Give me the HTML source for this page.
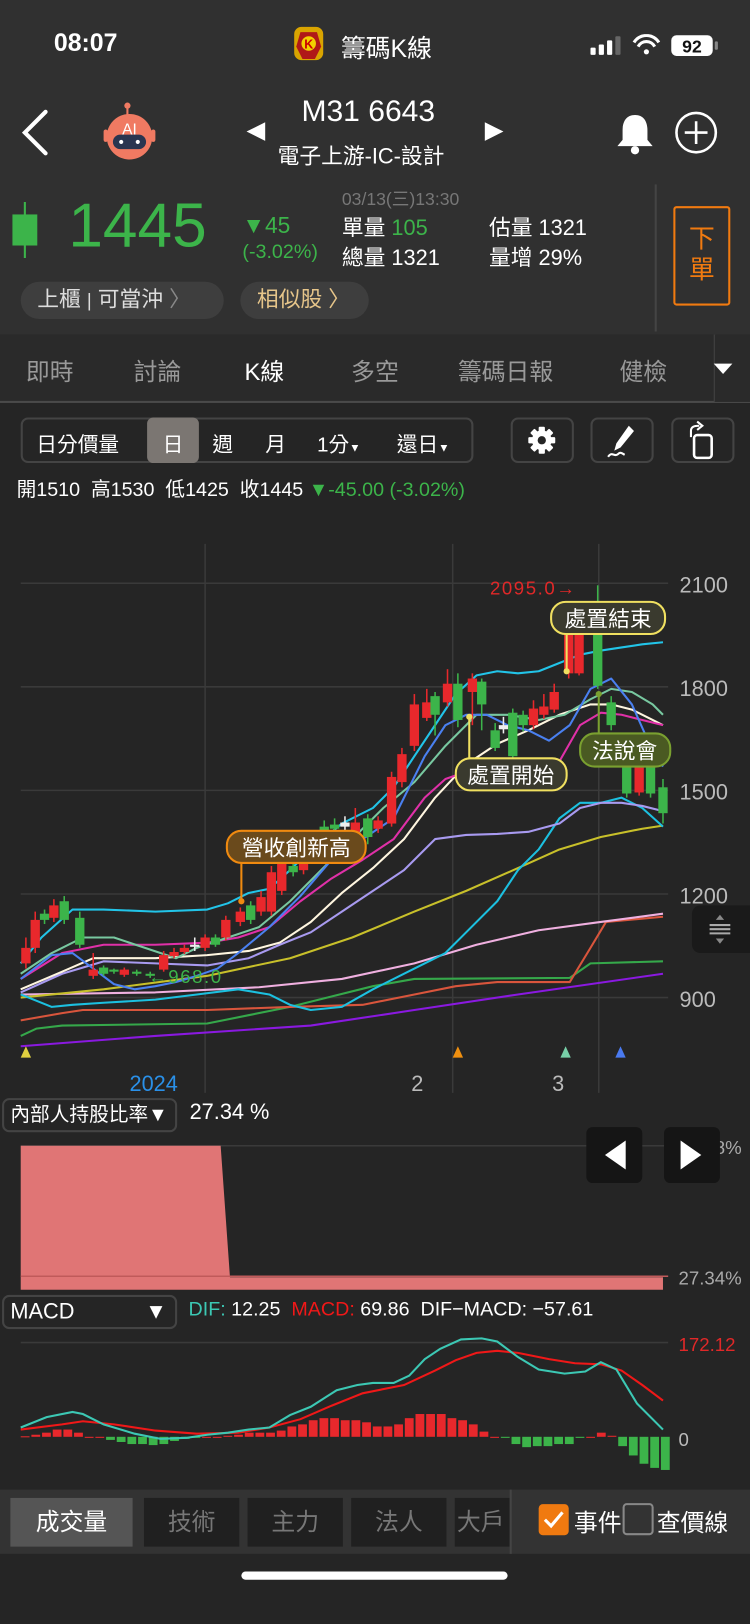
<!DOCTYPE html>
<html><head><meta charset="utf-8">
<style>
*{margin:0;padding:0;box-sizing:border-box}
html,body{width:750px;height:1624px;overflow:hidden;background:#252525}
#w{position:absolute;left:0;top:0;width:724px;height:1568px;transform:scale(1.03591);transform-origin:0 0;background:#252525;font-family:"Liberation Sans","Noto Sans CJK TC",sans-serif;color:#fff}
.a{position:absolute;white-space:nowrap}
</style></head><body><div id="w">
<div class="a" style="left:0;top:0;width:724px;height:323px;background:#303030"></div>
<div class="a" style="left:52px;top:28px;font-size:24px;font-weight:bold">08:07</div>
<svg class="a" style="left:282px;top:25px" width="32" height="34" viewBox="0 0 32 34"><rect x="2" y="1" width="28" height="32" rx="7" fill="#d9a400"/><path d="M8 6 L24 6 L28 20 L22 32 L10 32 L4 20Z" fill="#b01818"/><circle cx="16" cy="17" r="7" fill="#f2d000"/><text x="16" y="22" font-size="12" font-weight="bold" fill="#c00" text-anchor="middle" font-family="Liberation Sans">K</text></svg>
<div class="a" style="left:329px;top:27px;font-size:24px">籌碼K線</div>
<svg class="a" style="left:570px;top:33px" width="124" height="22" viewBox="0 0 124 22"><rect x="0" y="13" width="5" height="7" rx="1" fill="#fff"/><rect x="8" y="10" width="5" height="10" rx="1" fill="#fff"/><rect x="16" y="6" width="5" height="14" rx="1" fill="#fff"/><rect x="24" y="2" width="5" height="18" rx="1" fill="#666"/>
<path d="M42 8 A14 14 0 0 1 66 8" stroke="#fff" stroke-width="3" fill="none"/><path d="M46 12 A9 9 0 0 1 62 12" stroke="#fff" stroke-width="3" fill="none"/><circle cx="54" cy="17" r="2.5" fill="#fff"/>
<rect x="78" y="1" width="40" height="20" rx="5" fill="#fff"/><rect x="120" y="7" width="3" height="8" rx="1" fill="#888"/><text x="98" y="17.5" font-size="17" font-weight="bold" text-anchor="middle" fill="#111" font-family="Liberation Sans">92</text></svg>
<svg class="a" style="left:16px;top:104px" width="32" height="48"><path d="M28 4 L8 24 L28 44" stroke="#fff" stroke-width="4" fill="none" stroke-linecap="round"/></svg>
<svg class="a" style="left:96px;top:98px" width="62" height="62" viewBox="0 0 62 62"><line x1="27" y1="4" x2="27" y2="14" stroke="#f07a62" stroke-width="2"/><circle cx="27" cy="4" r="3" fill="#f07a62"/><rect x="4" y="27" width="4" height="12" rx="2" fill="#f07a62"/><rect x="50" y="27" width="4" height="12" rx="2" fill="#f07a62"/><circle cx="29" cy="34" r="22" fill="#f07a62"/><rect x="13" y="32" width="32" height="14" rx="7" fill="#2a3550"/><circle cx="21" cy="39" r="2" fill="#fff"/><circle cx="37" cy="39" r="2" fill="#fff"/><text x="29" y="32" font-size="15" fill="#fff" text-anchor="middle" font-family="Liberation Sans">AI</text></svg>
<svg class="a" style="left:236px;top:116px" width="22" height="22"><path d="M20 2 L2 11 L20 20Z" fill="#fff"/></svg>
<svg class="a" style="left:466px;top:116px" width="22" height="22"><path d="M2 2 L20 11 L2 20Z" fill="#fff"/></svg>
<div class="a" style="left:291px;top:92px;font-size:29px">M31 6643</div>
<div class="a" style="left:268px;top:135px;font-size:21px">電子上游-IC-設計</div>
<svg class="a" style="left:594px;top:108px" width="38" height="42" viewBox="0 0 38 42"><path d="M19 3 C10 3 7 10 7 18 L7 27 L2 33 L36 33 L31 27 L31 18 C31 10 28 3 19 3Z" fill="#fff"/><circle cx="19" cy="37" r="4" fill="#fff"/></svg>
<svg class="a" style="left:651px;top:107px" width="42" height="42"><circle cx="21" cy="21" r="19" stroke="#fff" stroke-width="2.5" fill="none"/><path d="M21 10 V32 M10 21 H32" stroke="#fff" stroke-width="2.5"/></svg>
<svg class="a" style="left:10px;top:195px" width="28" height="54"><line x1="14" y1="0" x2="14" y2="54" stroke="#3cb44a" stroke-width="2"/><rect x="2" y="12" width="24" height="30" fill="#3cb44a"/></svg>
<div class="a" style="left:66px;top:183px;font-size:60px;color:#3cb44a">1445</div>
<div class="a" style="left:234px;top:205px;font-size:22px;color:#3cb44a">▼45</div>
<div class="a" style="left:234px;top:233px;font-size:19px;color:#3cb44a">(-3.02%)</div>
<div class="a" style="left:330px;top:178px;font-size:17px;color:#777">03/13(三)13:30</div>
<div class="a" style="left:330px;top:204px;font-size:21px">單量 <span style="color:#3cb44a">105</span></div>
<div class="a" style="left:330px;top:233px;font-size:21px">總量 1321</div>
<div class="a" style="left:472px;top:204px;font-size:21px">估量 1321</div>
<div class="a" style="left:472px;top:233px;font-size:21px">量增 29%</div>
<div class="a" style="left:632px;top:178px;width:2px;height:142px;background:#444"></div>
<div class="a" style="left:650px;top:199px;width:55px;height:96px;border:2px solid #f07a10;border-radius:3px;color:#f07a10;font-size:25px;line-height:30px;text-align:center;padding-top:15px">下<br>單</div>
<div class="a" style="left:20px;top:272px;width:196px;height:36px;border-radius:18px;background:#3e3e3e;font-size:21px;line-height:36px;padding-left:16px;color:#ddd">上櫃 <span style="font-size:18px">|</span> 可當沖 <span style="color:#888">〉</span></div>
<div class="a" style="left:232px;top:272px;width:124px;height:36px;border-radius:18px;background:#3e3e3e;font-size:21px;line-height:36px;padding-left:16px;color:#e6c58a">相似股 〉</div>
<div class="a" style="left:0;top:323px;width:724px;height:66px;background:#2a2a2a;border-bottom:2px solid #4a4a4a"></div>
<div class="a" style="left:25px;top:340px;font-size:23px;color:#999">即時</div>
<div class="a" style="left:129px;top:340px;font-size:23px;color:#999">討論</div>
<div class="a" style="left:236px;top:340px;font-size:23px;color:#fff">K線</div>
<div class="a" style="left:339px;top:340px;font-size:23px;color:#999">多空</div>
<div class="a" style="left:442px;top:340px;font-size:23px;color:#999">籌碼日報</div>
<div class="a" style="left:598px;top:340px;font-size:23px;color:#999">健檢</div>
<div class="a" style="left:689px;top:323px;width:2px;height:65px;background:#444"></div>
<div class="a" style="left:690px;top:323px;width:34px;height:65px;background:#2a2a2a"></div>
<svg class="a" style="left:688px;top:349px" width="20" height="14"><path d="M1 2 H19 L10 12Z" fill="#fff"/></svg>
<div class="a" style="left:20px;top:403px;width:437px;height:44px;border:2px solid #444;border-radius:7px"></div>
<div class="a" style="left:142px;top:403px;width:50px;height:44px;background:#7b7672;border-radius:6px"></div>
<div class="a" style="left:35px;top:413px;font-size:20px">日分價量</div>
<div class="a" style="left:157px;top:413px;font-size:20px">日</div>
<div class="a" style="left:205px;top:413px;font-size:20px">週</div>
<div class="a" style="left:256px;top:413px;font-size:20px">月</div>
<div class="a" style="left:306px;top:413px;font-size:20px">1分<span style="font-size:11px">▼</span></div>
<div class="a" style="left:383px;top:413px;font-size:20px">還日<span style="font-size:11px">▼</span></div>
<div class="a" style="left:493px;top:403px;width:61px;height:44px;border:2px solid #444;border-radius:7px"></div>
<div class="a" style="left:570px;top:403px;width:61px;height:44px;border:2px solid #444;border-radius:7px"></div>
<div class="a" style="left:648px;top:403px;width:61px;height:44px;border:2px solid #444;border-radius:7px"></div>
<svg class="a" style="left:508px;top:410px" width="30" height="30" viewBox="0 0 30 30"><g fill="#fff" transform="translate(15 15)"><rect x="-3" y="-13" width="6" height="26" rx="1"/><rect x="-3" y="-13" width="6" height="26" rx="1" transform="rotate(45)"/><rect x="-3" y="-13" width="6" height="26" rx="1" transform="rotate(90)"/><rect x="-3" y="-13" width="6" height="26" rx="1" transform="rotate(135)"/><circle r="9.5"/></g><circle cx="15" cy="15" r="4" fill="#252525"/></svg>
<svg class="a" style="left:583px;top:408px" width="36" height="36" viewBox="0 0 36 36"><path d="M24 3 L29 8 L16 24 L10 27 L12 20Z" fill="#fff"/><path d="M4 33 C8 27 10 34 14 30 C16 28 18 30 20 31" stroke="#fff" stroke-width="2" fill="none"/></svg>
<svg class="a" style="left:663px;top:406px" width="30" height="38" viewBox="0 0 30 38"><rect x="7" y="14" width="17" height="22" rx="3" stroke="#fff" stroke-width="2.5" fill="none"/><path d="M4 16 V10 C4 6 7 5 12 5" stroke="#fff" stroke-width="2" fill="none"/><path d="M10 1 L15 5 L10 9" stroke="#fff" stroke-width="2" fill="none"/></svg>
<div class="a" style="left:16px;top:458px;font-size:19px">開1510 &nbsp;高1530 &nbsp;低1425 &nbsp;收1445 <span style="color:#3cb44a">▼-45.00 (-3.02%)</span></div>
<svg class="a" style="left:0;top:0" width="724" height="1568" viewBox="0 0 724 1568">
<g stroke="#3a3a3a" stroke-width="1.5">
<line x1="20" y1="563" x2="645" y2="563"/><line x1="20" y1="663" x2="645" y2="663"/><line x1="20" y1="763" x2="645" y2="763"/><line x1="20" y1="863" x2="645" y2="863"/><line x1="20" y1="963" x2="645" y2="963"/>
<line x1="198" y1="525" x2="198" y2="1055"/><line x1="437" y1="525" x2="437" y2="1055"/><line x1="578" y1="525" x2="578" y2="1055"/>
</g>
<g font-size="21" fill="#bbb" font-family="Liberation Sans"><text x="656" y="572">2100</text><text x="656" y="672">1800</text><text x="656" y="772">1500</text><text x="656" y="872">1200</text><text x="656" y="972">900</text></g>
<g fill="none" stroke-width="2" stroke-linejoin="round">
<polyline stroke="#8a19e0" points="20,1010 150,1000 300,990 400,975 500,960 640,940"/>
<polyline stroke="#35a84a" points="20,1000 35,993 60,990 200,988 240,980 280,972 320,962 360,952 400,945 550,944 570,930 640,928"/>
<polyline stroke="#d9553c" points="20,985 60,978 80,975 200,975 280,972 350,970 400,960 440,952 480,948 550,948 570,915 585,890 640,885"/>
<polyline stroke="#f0b0e0" points="20,960 150,958 250,953 330,945 400,930 460,912 520,898 580,890 640,882"/>
<polyline stroke="#c8c02a" points="20,963 100,955 200,942 280,925 340,905 400,880 450,860 500,838 540,820 580,808 620,800 640,797"/>
<polyline stroke="#1cc0e0" points="20,960 50,972 70,970 100,968 150,965 190,960 230,955 260,960 280,970 300,975 330,972 360,955 400,935 430,920 450,900 480,870 500,840 520,820 540,790 560,775 580,775 600,770 620,780 640,798"/>
<polyline stroke="#a89af0" points="20,958 60,940 100,928 150,930 200,932 240,925 270,912 300,900 330,880 360,860 390,840 420,810 450,806 480,805 510,803 540,795 560,780 580,775 600,775 620,778 640,783"/>
<polyline stroke="#fff6e0" points="20,955 60,938 90,925 150,925 200,922 240,918 270,910 300,890 330,862 360,838 390,810 420,770 450,738 480,718 510,705 540,690 570,680 590,680 610,685 630,695 640,700"/>
<polyline stroke="#e030a8" points="20,945 60,920 100,912 150,912 200,910 230,905 260,895 290,870 320,848 350,830 380,810 410,770 430,752 450,745 480,745 510,742 540,735 560,700 580,688 600,690 620,695 640,700"/>
<polyline stroke="#78c8a0" points="20,940 50,920 80,905 110,905 140,915 170,925 190,915 220,905 250,895 280,870 310,840 340,810 370,780 400,755 430,720 460,690 490,690 520,695 545,690 570,675 590,665 610,668 630,680 640,690"/>
<polyline stroke="#4a80f0" points="20,945 50,922 70,920 90,935 110,950 130,955 150,952 170,948 190,942 210,935 230,920 260,895 290,865 320,830 350,810 380,790 410,730 430,700 450,690 470,690 490,700 510,705 530,715 550,700 570,665 590,655 610,680 630,725 640,740"/>
<polyline stroke="#22c4e8" points="20,930 40,905 70,878 100,878 150,880 200,878 220,872 240,862 260,858 280,840 300,820 330,795 360,780 380,760 400,730 420,700 440,670 460,652 480,648 500,650 520,648 540,640 560,632 580,628 600,625 620,622 640,620"/>
</g>
<g id="cd"></g>
<text x="473" y="574" font-size="18" fill="#e02828" font-family="Liberation Sans" letter-spacing="1.5">2095.0→</text>
<text x="143" y="949" font-size="18" fill="#3cb44a" font-family="Liberation Sans" letter-spacing="1.5">←968.0</text>
<line x1="233" y1="832" x2="233" y2="870" stroke="#f08a10" stroke-width="2"/><circle cx="233" cy="870" r="3" fill="#f08a10"/>
<rect x="219" y="802" width="134" height="31" rx="14" fill="#6a4a1c" stroke="#f08a10" stroke-width="2"/>
<text x="286" y="826" font-size="21" fill="#fff" text-anchor="middle" font-family="Noto Sans CJK TC">營收創新高</text>
<line x1="453" y1="692" x2="453" y2="732" stroke="#f0e060" stroke-width="2"/><circle cx="453" cy="692" r="3" fill="#f0e060"/>
<rect x="440" y="732" width="107" height="31" rx="14" fill="#3a3a2e" stroke="#f0e060" stroke-width="2"/>
<text x="493" y="756" font-size="21" fill="#fff" text-anchor="middle" font-family="Noto Sans CJK TC">處置開始</text>
<line x1="547" y1="611" x2="547" y2="648" stroke="#f0e060" stroke-width="2"/><circle cx="547" cy="648" r="3" fill="#f0e060"/>
<rect x="532" y="581" width="110" height="31" rx="14" fill="#3a3a2e" stroke="#f0e060" stroke-width="2"/>
<text x="587" y="605" font-size="21" fill="#fff" text-anchor="middle" font-family="Noto Sans CJK TC">處置結束</text>
<line x1="578" y1="670" x2="578" y2="708" stroke="#7aa030" stroke-width="2"/><circle cx="578" cy="670" r="3" fill="#7aa030"/>
<rect x="560" y="708" width="87" height="32" rx="14" fill="#4a5a22" stroke="#7aa030" stroke-width="2"/>
<text x="603" y="732" font-size="21" fill="#fff" text-anchor="middle" font-family="Noto Sans CJK TC">法說會</text>
<path d="M20 1021 L25 1010 L30 1021Z" fill="#e0d040"/><path d="M437 1021 L442 1010 L447 1021Z" fill="#f09010"/><path d="M541 1021 L546 1010 L551 1021Z" fill="#78d0a8"/><path d="M594 1021 L599 1010 L604 1021Z" fill="#4a7af0"/>
<text x="125" y="1053" font-size="21" fill="#2a90e8" font-family="Liberation Sans">2024</text>
<text x="397" y="1053" font-size="21" fill="#bbb" font-family="Liberation Sans">2</text>
<text x="533" y="1053" font-size="21" fill="#bbb" font-family="Liberation Sans">3</text>
<line x1="20" y1="1106" x2="645" y2="1106" stroke="#3a3a3a" stroke-width="1.5"/>
<polygon points="20,1106 213,1106 222,1233 640,1233 640,1245 20,1245" fill="#e07575"/>
<line x1="20" y1="1232" x2="645" y2="1232" stroke="#c05a5a" stroke-width="1.5"/>
<text x="655" y="1114" font-size="18" fill="#aaa" font-family="Liberation Sans">27.38%</text>
<text x="655" y="1240" font-size="18" fill="#aaa" font-family="Liberation Sans">27.34%</text>
<rect x="566" y="1088" width="54" height="54" rx="6" fill="#151515"/><rect x="641" y="1088" width="54" height="54" rx="6" fill="#151515"/>
<path d="M604 1101 L584 1115 L604 1129Z" fill="#fff"/><path d="M657 1101 L677 1115 L657 1129Z" fill="#fff"/>
<line x1="20" y1="1296" x2="645" y2="1296" stroke="#3a3a3a" stroke-width="1.5"/>
<text x="655" y="1304" font-size="18" fill="#e02828" font-family="Liberation Sans">172.12</text>
<text x="655" y="1396" font-size="18" fill="#bbb" font-family="Liberation Sans">0</text>
<g id="hist"></g>
<polyline fill="none" stroke="#f01818" stroke-width="2" points="20,1380 60,1375 80,1372 110,1375 150,1381 190,1384 230,1383 260,1378 290,1370 320,1357 350,1345 390,1337 420,1323 440,1313 460,1306 480,1304 500,1306 530,1312 555,1316 580,1317 600,1323 620,1337 640,1352"/>
<polyline fill="none" stroke="#3cc8b4" stroke-width="2" points="20,1378 45,1368 70,1363 80,1365 100,1375 130,1384 155,1389 180,1388 200,1385 220,1383 240,1380 260,1378 280,1366 300,1358 325,1342 345,1337 360,1335 380,1335 395,1328 410,1312 425,1302 445,1293 465,1292 480,1295 500,1310 520,1322 545,1326 565,1324 580,1315 595,1322 615,1355 640,1380"/>
</svg>
<div class="a" style="left:668px;top:874px;width:56px;height:46px;background:#1a1a1a;border-radius:8px 0 0 8px"></div>
<svg class="a" style="left:680px;top:880px" width="30" height="34"><path d="M11 8 L15 3 L19 8Z M11 26 L15 31 L19 26Z" fill="#888"/><path d="M5 13 H25 M5 17 H25 M5 21 H25" stroke="#aaa" stroke-width="2"/></svg>
<div class="a" style="left:2px;top:1060px;width:169px;height:33px;border:2px solid #444;border-radius:7px;font-size:19px;line-height:29px;padding-left:6px">內部人持股比率▼</div>
<div class="a" style="left:183px;top:1062px;font-size:21px">27.34 %</div>
<div class="a" style="left:2px;top:1250px;width:169px;height:33px;border:2px solid #444;border-radius:7px;font-size:21px;line-height:29px;padding-left:6px">MACD<span style="position:absolute;right:8px">▼</span></div>
<div class="a" style="left:182px;top:1254px;font-size:19px"><span style="color:#3cc8b4">DIF:</span> 12.25 &nbsp;<span style="color:#f01818">MACD:</span> 69.86 &nbsp;DIF−MACD: −57.61</div>
<div class="a" style="left:0;top:1438px;width:724px;height:62px;background:#333"></div>
<div class="a" style="left:10px;top:1446px;width:118px;height:47px;background:#555;color:#fff;font-size:23px;line-height:47px;text-align:center">成交量</div>
<div class="a" style="left:139px;top:1446px;width:92px;height:47px;background:#202020;color:#777;font-size:23px;line-height:47px;text-align:center">技術</div>
<div class="a" style="left:239px;top:1446px;width:92px;height:47px;background:#202020;color:#777;font-size:23px;line-height:47px;text-align:center">主力</div>
<div class="a" style="left:339px;top:1446px;width:92px;height:47px;background:#202020;color:#777;font-size:23px;line-height:47px;text-align:center">法人</div>
<div class="a" style="left:439px;top:1446px;width:53px;height:47px;background:#202020;color:#777;font-size:23px;line-height:47px;padding-left:2px;overflow:hidden">大戶</div>
<div class="a" style="left:492px;top:1438px;width:2px;height:62px;background:#444"></div>
<svg class="a" style="left:519px;top:1451px" width="32" height="32"><rect x="1" y="1" width="29" height="30" rx="4" fill="#f07a10"/><path d="M7 16 L13 22 L24 9" stroke="#fff" stroke-width="3" fill="none"/></svg>
<div class="a" style="left:554px;top:1451px;font-size:23px">事件</div>
<div class="a" style="left:601px;top:1451px;width:30px;height:31px;border:2px solid #888;border-radius:4px"></div>
<div class="a" style="left:634px;top:1451px;font-size:23px">查價線</div>
<div class="a" style="left:233px;top:1517px;width:257px;height:8px;border-radius:4px;background:#fff"></div>
</div>
<script>
var c=[[25,915,930,'r',905,935],[34,888,915,'r',880,920],[43,882,888,'g',878,892],[52,874,886,'r',868,890],[62,870,888,'g',865,892],[77,886,912,'g',880,915],[90,936,942,'r',920,945],[100,934,940,'g',932,942],[110,936,938,'g',935,940],[120,936,941,'r',934,943],[132,938,940,'g',936,942],[145,940,942,'g',938,944],[158,922,936,'r',918,938],[168,919,923,'r',915,925],[178,915,919,'r',912,921],[188,912,914,'w',905,918],[198,905,915,'r',902,918],[208,905,912,'g',902,914],[218,888,905,'r',884,908],[232,880,890,'r',876,894],[242,874,888,'g',870,892],[252,866,880,'r',860,884],[262,842,880,'r',836,884],[272,834,860,'r',828,864],[283,836,842,'g',832,846],[293,824,840,'r',818,844],[303,816,828,'r',806,832],[313,798,808,'g',792,812],[323,796,800,'g',790,805],[333,794,798,'w',788,802],[343,794,803,'r',780,806],[355,790,808,'g',786,815],[365,792,800,'r',788,804],[378,750,795,'r',745,798],[388,728,755,'r',722,760],[400,680,720,'r',670,725],[412,678,693,'r',665,696],[420,672,690,'g',668,710],[432,660,678,'r',646,682],[442,660,695,'g',650,702],[456,655,668,'r',650,700],[465,658,680,'g',655,705],[478,705,722,'g',698,725],[486,700,704,'w',692,708],[495,688,730,'g',684,732],[505,690,700,'g',686,706],[515,684,700,'r',676,704],[525,682,690,'r',670,694],[535,668,685,'r',660,688],[549,603,650,'r',596,655],[559,598,650,'r',590,652],[577,598,662,'g',565,665],[590,678,700,'g',672,705],[605,718,766,'g',712,770],[617,736,765,'r',730,768],[628,738,766,'g',734,770],[640,760,785,'g',752,795]];
var s='';c.forEach(function(k){var col=k[3]=='r'?'#e8282c':k[3]=='g'?'#3cb44a':'#eee';s+='<line x1="'+k[0]+'" y1="'+k[4]+'" x2="'+k[0]+'" y2="'+k[5]+'" stroke="'+col+'" stroke-width="1.5"/><rect x="'+(k[0]-4.5)+'" y="'+k[1]+'" width="9" height="'+Math.max(2,k[2]-k[1])+'" fill="'+col+'"/>';});
document.getElementById('cd').innerHTML=s;
var h=[0.5,2,4,7,7,4,0,0,-3,-5,-7,-7,-8,-7,-4,-2,-1,0,0,1,2,4,4,4,6,10,12,16,18,18,16,16,14,10,10,12,18,22,22,22,18,16,12,5,0,-1,-7,-10,-9,-9,-7,-7,-1,0,4,1,-9,-18,-26,-30,-32];
var t='';h.forEach(function(v,i){var x=20+i*10.3;var col=v>=0?'#e8282c':'#3cb44a';var y=v>=0?1387-v:1387;t+='<rect x="'+x.toFixed(1)+'" y="'+y+'" width="8.5" height="'+Math.max(1,Math.abs(v))+'" fill="'+col+'"/>';});
document.getElementById('hist').innerHTML=t;
</script>
</body></html>
